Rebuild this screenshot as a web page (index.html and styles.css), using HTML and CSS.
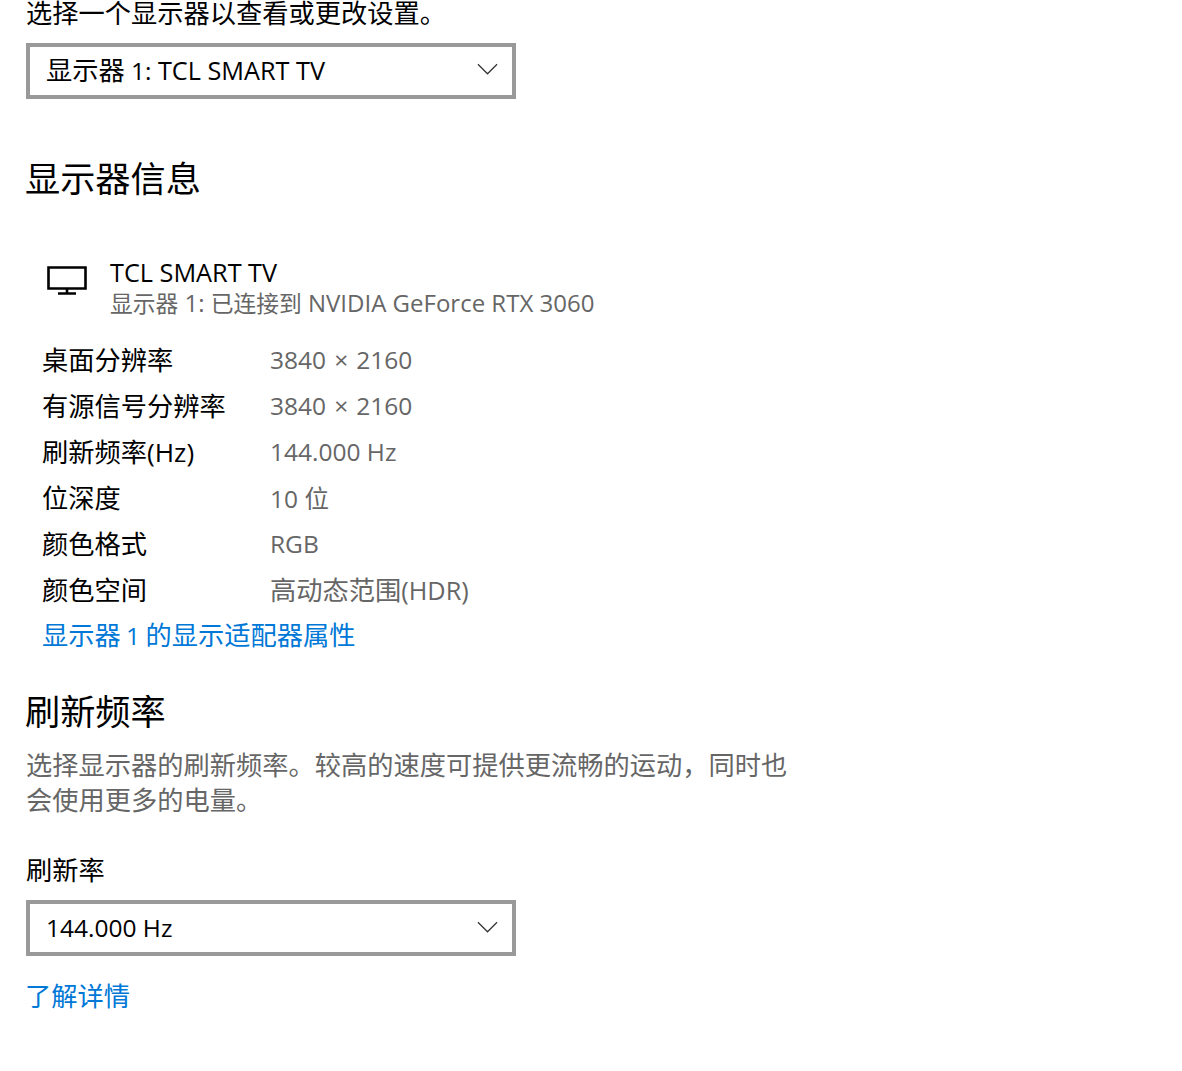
FILE: index.html
```html
<!DOCTYPE html>
<html lang="zh-CN">
<head>
    <meta charset="UTF-8">
    <title>显示设置</title>
    <link rel="stylesheet" href="styles.css">
</head>
<body>
    <p class="lead">选择一个显示器以查看或更改设置。</p>
    <div class="select select-top">
        <span>显示器<span class="num"> 1: </span><span class="lat">TCL SMART TV</span></span>
        <svg class="chevron" viewBox="0 0 22 12"><path d="M1 1l10 10L21 1" fill="none" stroke="#333" stroke-width="1.3"/></svg>
    </div>

    <h2 class="heading-info">显示器信息</h2>

    <div class="monitor">
        <svg class="monitor-icon" viewBox="0 0 40 29"><path d="M1.5 1.5h37v21h-37zM20 22.5v5M11 27.5h18" fill="none" stroke="#000" stroke-width="2.6"/></svg>
        <div>
            <div class="monitor-name lat">TCL SMART TV</div>
            <div class="monitor-sub">显示器<span class="sub-lat"> 1: </span>已连接到<span class="sub-lat"> NVIDIA GeForce RTX 3060</span></div>
        </div>
    </div>

    <div class="info">
        <div>桌面分辨率</div><div class="info-value num spaced">3840 × 2160</div>
        <div>有源信号分辨率</div><div class="info-value num spaced">3840 × 2160</div>
        <div>刷新频率(Hz)</div><div class="info-value num">144.000 Hz</div>
        <div>位深度</div><div class="info-value num">10 位</div>
        <div>颜色格式</div><div class="info-value num">RGB</div>
        <div>颜色空间</div><div class="info-value">高动态范围<span class="lat">(HDR)</span></div>
    </div>
    <a class="link adapter-link" href="#">显示器<span class="num"> 1 </span>的显示适配器属性</a>

    <h2 class="heading-rate">刷新频率</h2>
    <p class="desc">选择显示器的刷新频率。较高的速度可提供更流畅的运动，同时也会使用更多的电量。</p>

    <div class="field-label">刷新率</div>
    <div class="select">
        <span class="num">144.000 Hz</span>
        <svg class="chevron" viewBox="0 0 22 12"><path d="M1 1l10 10L21 1" fill="none" stroke="#333" stroke-width="1.3"/></svg>
    </div>
    <a class="link more-link" href="#">了解详情</a>
</body>
</html>
```

FILE: styles.css
```css
body {
    margin: 0;
    padding: 0 0 0 26px;
    height: 1071px;
    box-sizing: border-box;
    overflow: hidden;
    background: #fff;
    color: #000;
    font-family: "Open Sans", "Noto Sans CJK SC", sans-serif;
    font-size: 26.25px;
}

p,
h2 {
    margin: 0;
    font-weight: 400;
}

/* latin text runs a bit narrower than the cjk next to it */
.num {
    font-size: 24.5px;
}

.lat {
    font-size: 25.25px;
}

.spaced {
    word-spacing: 1.75px;
}

.lead {
    line-height: 26px;
}

.select {
    width: 490px;
    height: 56px;
    box-sizing: border-box;
    border: 4px solid #999;
    padding: 0 14px 2px 16px;
    display: flex;
    align-items: center;
    justify-content: space-between;
}

.select-top {
    margin-top: 17px;
    padding-bottom: 4px;
}

.chevron {
    width: 21px;
    height: 12px;
}

h2 {
    font-size: 35.2px;
    line-height: 46px;
    margin-left: -1px;
}

.heading-info {
    margin-top: 56px;
}

.monitor {
    margin: 56px 0 0 21px;
    display: flex;
    align-items: flex-start;
    gap: 23px;
}

.monitor-icon {
    width: 40px;
    height: 29px;
    margin-top: 9px;
}

.monitor-name {
    line-height: 30px;
}

.monitor-sub,
.info-value,
.desc {
    color: #666;
}

.monitor-sub {
    font-size: 22.75px;
    line-height: 32px;
}

.sub-lat {
    font-size: 24px;
}

.info {
    margin: 16px 0 0 16px;
    display: grid;
    grid-template-columns: 228px 1fr;
    grid-auto-rows: 46px;
    align-items: center;
}

.link {
    color: #0078d7;
    text-decoration: none;
    display: block;
}

.adapter-link {
    margin-left: 16px;
    line-height: 46px;
    word-spacing: -1px;
}

.heading-rate {
    margin-top: 29px;
}

.desc {
    margin-top: 14px;
    width: 770px;
    line-height: 35px;
}

.field-label {
    margin-top: 34px;
    line-height: 36px;
}

.field-label + .select {
    margin-top: 12px;
}

.select + .link {
    margin-top: 22px;
}

.more-link {
    line-height: 36px;
    margin-left: -1px;
}
```
